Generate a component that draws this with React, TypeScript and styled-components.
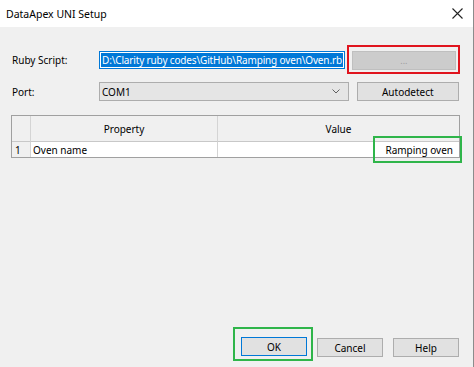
import React from "react";
import styled, { createGlobalStyle } from "styled-components";

const GlobalStyle = createGlobalStyle`
  html, body {
    margin: 0;
    padding: 0;
    background: #f0f0f0;
  }
  body {
    font-family: "Noto Sans", "Open Sans", sans-serif;
    font-size: 10px;
    color: #000;
  }
`;

const Window = styled.div`
  width: 474px;
  height: 367px;
  box-sizing: border-box;
  border-right: 1px solid #8c8c8c;
  display: flex;
  flex-direction: column;
  background: #f0f0f0;
  overflow: hidden;
`;

const TitleBar = styled.div`
  height: 27px;
  flex-shrink: 0;
  background: #fff;
  display: flex;
  align-items: center;
  justify-content: space-between;
  padding: 0 10px 0 6px;
  font-size: 10.5px;
`;

const CloseIcon = styled.svg`
  width: 11px;
  height: 11px;
  display: block;
`;

const Body = styled.div`
  flex: 1;
  display: flex;
  flex-direction: column;
  padding: 18px 14px 6px 11px;
`;

const FieldRow = styled.div<{ $top?: number }>`
  display: flex;
  align-items: center;
  margin-top: ${({ $top }) => $top ?? 0}px;
`;

const Label = styled.div`
  width: 87px;
  padding-left: 1px;
  flex-shrink: 0;
`;

const TextField = styled.div`
  width: 250px;
  height: 18px;
  box-sizing: border-box;
  border: 1px solid #0078d7;
  background: #fff;
  display: flex;
  align-items: center;
  padding: 0 1px;
`;

const Selected = styled.span`
  background: #0078d7;
  color: #fff;
  line-height: 14px;
  padding: 0 1px;
  white-space: nowrap;
  letter-spacing: -0.15px;
`;

const Highlight = styled.div<{ $color: string }>`
  border: 2px solid ${({ $color }) => $color};
  box-sizing: border-box;
`;

const RedFrame = styled(Highlight)`
  margin-left: 2px;
  padding: 4px 2px 2px 3px;
`;

const GreenFrame = styled(Highlight)`
  padding: 8px 4px 3px 6px;
  margin-bottom: -4px;
  margin-right: -6px;
`;

const Button = styled.div<{ $width?: number; $disabled?: boolean; $default?: boolean }>`
  width: ${({ $width }) => $width ?? 66}px;
  height: 19px;
  box-sizing: border-box;
  display: flex;
  align-items: center;
  justify-content: center;
  background: ${({ $disabled }) => ($disabled ? "#cccccc" : "#e1e1e1")};
  border: 1px solid
    ${({ $disabled, $default }) =>
      $default ? "#0078d7" : $disabled ? "#bfbfbf" : "#adadad"};
  color: ${({ $disabled }) => ($disabled ? "#9d9d9d" : "#000")};
  font-size: ${({ $disabled }) => ($disabled ? "9px" : "inherit")};
`;

const Combo = styled.div`
  width: 251px;
  height: 19px;
  box-sizing: border-box;
  border: 1px solid #adadad;
  background: #e5e5e5;
  display: flex;
  align-items: center;
  justify-content: space-between;
  padding: 0 8px 0 2px;
`;

const Chevron = styled.svg`
  width: 8px;
  height: 5px;
  display: block;
`;

const Spacer = styled.div`
  width: 8px;
  flex-shrink: 0;
`;

const Table = styled.div`
  margin-top: 14px;
  width: 449px;
  box-sizing: border-box;
  border: 1px solid #a0a0a0;
  background: #f0f0f0;
  display: grid;
  grid-template-columns: 19px 187px 1fr;
  grid-template-rows: 26px 15px;
`;

const HeadCell = styled.div<{ $last?: boolean }>`
  display: flex;
  align-items: center;
  justify-content: center;
  border-right: ${({ $last }) => ($last ? "none" : "1px solid #d4d4d4")};
  border-bottom: 1px solid #c8c8c8;
`;

const NumCell = styled.div`
  display: flex;
  align-items: center;
  padding-left: 3px;
  border-right: 1px solid #d4d4d4;
`;

const DataCell = styled.div<{ $right?: boolean; $last?: boolean }>`
  position: relative;
  background: #fff;
  display: flex;
  align-items: center;
  justify-content: ${({ $right }) => ($right ? "flex-end" : "flex-start")};
  padding: 0 6px 0 2px;
  border-right: ${({ $last }) => ($last ? "none" : "1px solid #d4d4d4")};
`;

const CellMark = styled.div`
  position: absolute;
  top: -6px;
  bottom: -6px;
  right: -3px;
  width: 89px;
  border: 2px solid #2fb54a;
  box-sizing: border-box;
  pointer-events: none;
`;

const Grow = styled.div`
  flex: 1;
`;

const Footer = styled.div`
  display: flex;
  justify-content: flex-end;
  align-items: flex-end;
  gap: 10px;
  padding-bottom: 4px;
`;

export default function App() {
  return (
    <>
      <GlobalStyle />
      <Window>
        <TitleBar>
          <span>DataApex UNI Setup</span>
          <CloseIcon viewBox="0 0 11 11">
            <path d="M0.5 0.5 L10.5 10.5 M10.5 0.5 L0.5 10.5" stroke="#222" strokeWidth="1.1" fill="none" />
          </CloseIcon>
        </TitleBar>
        <Body>
          <FieldRow>
            <Label>Ruby Script:</Label>
            <TextField>
              <Selected>D:\Clarity ruby codes\GitHub\Ramping oven\Oven.rb</Selected>
            </TextField>
            <RedFrame $color="#e0141e">
              <Button $width={104} $disabled>
                ...
              </Button>
            </RedFrame>
          </FieldRow>
          <FieldRow $top={8}>
            <Label>Port:</Label>
            <Combo>
              <span>COM1</span>
              <Chevron viewBox="0 0 8 5">
                <path d="M0.5 0.5 L4 4 L7.5 0.5" stroke="#606060" strokeWidth="1" fill="none" />
              </Chevron>
            </Combo>
            <Spacer />
            <Button $width={103}>Autodetect</Button>
          </FieldRow>
          <Table>
            <HeadCell />
            <HeadCell>Property</HeadCell>
            <HeadCell $last>Value</HeadCell>
            <NumCell>1</NumCell>
            <DataCell>Oven name</DataCell>
            <DataCell $right $last>
              Ramping oven
              <CellMark />
            </DataCell>
          </Table>
          <Grow />
          <Footer>
            <GreenFrame $color="#2fb54a">
              <Button $default>OK</Button>
            </GreenFrame>
            <Button>Cancel</Button>
            <Button>Help</Button>
          </Footer>
        </Body>
      </Window>
    </>
  );
}
